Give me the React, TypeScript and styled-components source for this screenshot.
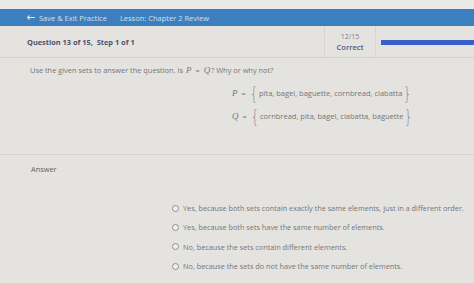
import * as React from 'react';
import styled, { createGlobalStyle } from 'styled-components';

const GlobalStyle = createGlobalStyle`
  html, body {
    margin: 0;
    padding: 0;
    background: #e4e3df;
  }
  body {
    font-family: 'Open Sans', 'Liberation Sans', sans-serif;
    color: #727478;
  }
`;

const Page = styled.div`
  width: 474px;
  height: 283px;
  overflow: hidden;
  display: flex;
  flex-direction: column;
  background: #e4e3df;
`;

const TopStrip = styled.div`
  height: 9px;
  background: #e9e9e7;
`;

const NavBar = styled.div`
  height: 17px;
  background: #3c7fbf;
  display: flex;
  align-items: center;
  padding-left: 27px;
  gap: 13px;
  font-size: 7.5px;
  color: #cfe0f2;
`;

const NavLink = styled.span`
  display: flex;
  align-items: center;
  gap: 4px;
`;

const Header = styled.div`
  height: 31px;
  display: flex;
  align-items: center;
  border-bottom: 1px solid #d2d1cd;
`;

const QuestionTitle = styled.div`
  flex: 1;
  padding-left: 27px;
  font-size: 7.4px;
  font-weight: 700;
  color: #4c5272;
`;

const Score = styled.div`
  width: 50px;
  align-self: stretch;
  border-left: 1px solid #d6d5d1;
  border-right: 1px solid #d6d5d1;
  display: flex;
  flex-direction: column;
  align-items: center;
  justify-content: center;
  line-height: 10px;
`;

const ScoreCount = styled.span`
  font-size: 7px;
  color: #7d8196;
`;

const ScoreLabel = styled.span`
  font-size: 7.5px;
  font-weight: 600;
  color: #4e5a86;
`;

const Progress = styled.div`
  width: 93px;
  height: 5px;
  margin-left: 5px;
  margin-top: 2px;
  background: #3a5fc6;
`;

const Content = styled.div`
  padding: 7px 0 0 30px;
`;

const Prompt = styled.p`
  margin: 0;
  font-size: 7.4px;
  line-height: 10px;
  color: #74767a;
`;

const Var = styled.i`
  font-family: 'Liberation Serif', serif;
  font-size: 9px;
  padding: 0 1px;
`;

const Eq = styled.span`
  padding: 0 3px;
  font-size: 7.4px;
`;

const Sets = styled.div`
  margin: 9px 0 0 201px;
  display: flex;
  flex-direction: column;
  gap: 5px;
`;

const SetRow = styled.div`
  display: flex;
  align-items: center;
  height: 18px;
  font-size: 7.5px;
  color: #74767a;
`;

const Brace = styled.span`
  font-family: 'DejaVu Sans', sans-serif;
  font-weight: 200;
  font-size: 13px;
  display: inline-block;
  transform: scaleY(1.4);
  color: #8a8c90;
  padding: 0 1px;
`;

const Divider = styled.div`
  height: 1px;
  background: #d5d4d0;
  margin-top: 29px;
`;

const AnswerLabel = styled.div`
  padding: 9px 0 0 31px;
  font-size: 7.4px;
  color: #5f6268;
`;

const Options = styled.div`
  margin: 29px 0 0 172px;
  display: flex;
  flex-direction: column;
  gap: 9.4px;
`;

const Option = styled.label`
  display: flex;
  align-items: center;
  gap: 4px;
  height: 10px;
  font-size: 7.3px;
  color: #74767a;
  white-space: nowrap;
`;

const Radio = styled.span`
  width: 5px;
  height: 5px;
  flex-shrink: 0;
  border-radius: 50%;
  border: 1px solid #8d8f94;
  background: #f0f0ee;
`;

const options = [
  'Yes, because both sets contain exactly the same elements, just in a different order.',
  'Yes, because both sets have the same number of elements.',
  'No, because the sets contain different elements.',
  'No, because the sets do not have the same number of elements.',
];

export default function App() {
  return (
    <Page>
      <GlobalStyle />
      <TopStrip />
      <NavBar>
        <NavLink>
          <svg width="8" height="5" viewBox="0 0 8 5">
            <path d="M0.5 2.5H8M2.5 0.5L0.5 2.5L2.5 4.5" stroke="#dbe7f5" strokeWidth="1.1" fill="none" />
          </svg>
          Save &amp; Exit Practice
        </NavLink>
        <NavLink>Lesson: Chapter 2 Review</NavLink>
      </NavBar>
      <Header>
        <QuestionTitle>Question 13 of 15,&nbsp; Step 1 of 1</QuestionTitle>
        <Score>
          <ScoreCount>12/15</ScoreCount>
          <ScoreLabel>Correct</ScoreLabel>
        </Score>
        <Progress />
      </Header>
      <Content>
        <Prompt>
          Use the given sets to answer the question. Is <Var>P</Var>
          <Eq>=</Eq>
          <Var>Q</Var>? Why or why not?
        </Prompt>
        <Sets>
          <SetRow>
            <Var>P</Var>
            <Eq>=</Eq>
            <Brace>{'{'}</Brace>
            pita, bagel, baguette, cornbread, ciabatta
            <Brace>{'}'}</Brace>
          </SetRow>
          <SetRow>
            <Var>Q</Var>
            <Eq>=</Eq>
            <Brace>{'{'}</Brace>
            cornbread, pita, bagel, ciabatta, baguette
            <Brace>{'}'}</Brace>
          </SetRow>
        </Sets>
      </Content>
      <Divider />
      <AnswerLabel>Answer</AnswerLabel>
      <Options>
        {options.map((text) => (
          <Option key={text}>
            <Radio />
            {text}
          </Option>
        ))}
      </Options>
    </Page>
  );
}
